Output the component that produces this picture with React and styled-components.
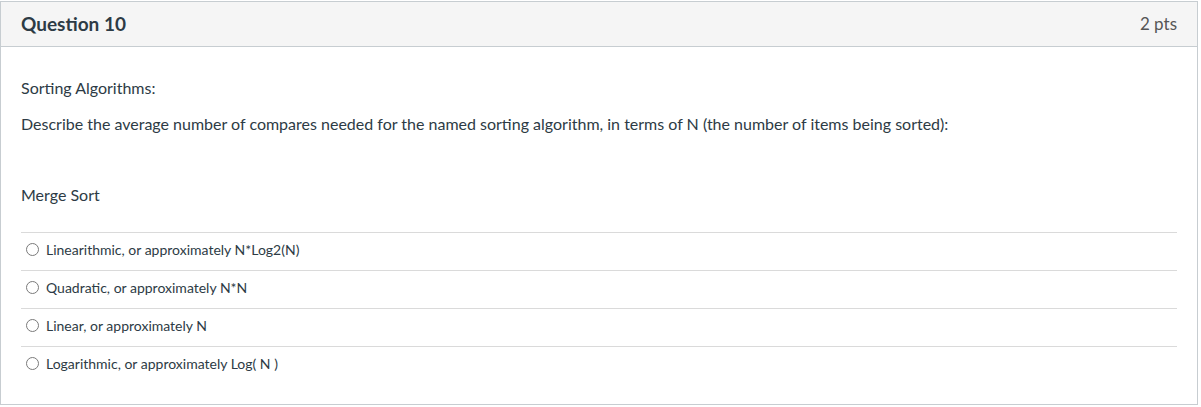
import React from "react";
import styled, { createGlobalStyle } from "styled-components";

const Global = createGlobalStyle`
  body {
    margin: 0;
    background: #fff;
    font-family: Lato, "Helvetica Neue", Arial, sans-serif;
    color: #2d3b45;
  }
`;

const Page = styled.main`
  padding: 1px 3px 0 0;
`;

const Card = styled.section`
  border: 1px solid #c7cdd1;
  box-sizing: border-box;
  height: 404px;
`;

const Header = styled.header`
  display: flex;
  align-items: center;
  justify-content: space-between;
  height: 42px;
  padding: 0 20px 2px 20px;
  background: #f5f5f5;
  border-bottom: 1px solid #c7cdd1;
`;

const Title = styled.h2`
  margin: 0;
  font-size: 19px;
  font-weight: 700;
  color: #2d3b45;
`;

const Points = styled.span`
  font-size: 17px;
  color: #565656;
`;

const Body = styled.div`
  padding: 31px 20px 0 20px;
  font-size: 16px;
  color: #2d3b45;
`;

const Para = styled.p`
  margin: 0 0 ${(p) => p.gap || 17}px 0;
  line-height: 19px;
`;

const Answers = styled.ul`
  list-style: none;
  margin: 0;
  padding: 0;
`;

const Answer = styled.li`
  display: flex;
  align-items: center;
  gap: 7px;
  height: 33px;
  padding: 0 0 4px 5px;
  border-top: 1px solid #dadada;
  font-size: 14px;
  color: #2d3b45;
`;

const Radio = styled.span`
  width: 11px;
  height: 11px;
  border: 1px solid #7a7a7a;
  border-radius: 50%;
  background: #fff;
`;

const options = [
  "Linearithmic, or approximately N*Log2(N)",
  "Quadratic, or approximately N*N",
  "Linear, or approximately N",
  "Logarithmic, or approximately Log( N )",
];

export default function App() {
  return (
    <Page>
      <Global />
      <Card>
        <Header>
          <Title>Question 10</Title>
          <Points>2 pts</Points>
        </Header>
        <Body>
          <Para>Sorting Algorithms:</Para>
          <Para gap={52}>
            Describe the average number of compares needed for the named
            sorting algorithm, in terms of N (the number of items being sorted):
          </Para>
          <Para gap={28}>Merge Sort</Para>
          <Answers>
            {options.map((o) => (
              <Answer key={o}>
                <Radio />
                {o}
              </Answer>
            ))}
          </Answers>
        </Body>
      </Card>
    </Page>
  );
}
